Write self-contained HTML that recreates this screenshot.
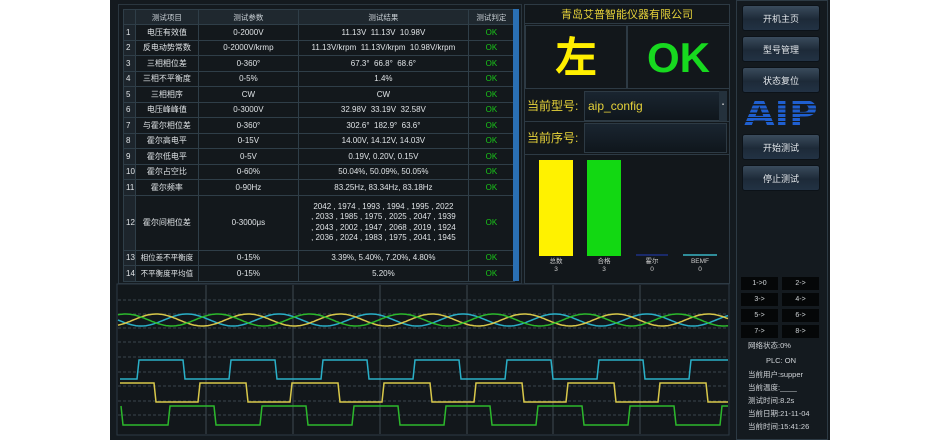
<!DOCTYPE html>
<html><head><meta charset="utf-8"><style>
*{margin:0;padding:0;box-sizing:border-box}
body{width:940px;height:440px;background:#fff;position:relative;overflow:hidden;font-family:"Liberation Sans","Noto Sans CJK SC",sans-serif}
.a{position:absolute}
#main{left:110px;top:0;width:720px;height:440px;background:#141a1f}
table{position:absolute;left:123px;top:9px;border-collapse:collapse;table-layout:fixed;font-size:8px;color:#dfe3e6}
td{border:1px solid #2f3e48;text-align:center;background:#13181c;height:15.5px;padding:0;line-height:9px;white-space:nowrap;overflow:hidden}
tr.h td{background:#1f282f;color:#c8cfd4;height:15px;font-size:7.5px}
td.n{background:#1d252c;text-align:left;padding-left:2px}
td.ok{color:#19c719}
.btn{left:742px;width:78px;height:26px;border-radius:3px;background:linear-gradient(#3a4b5c,#1d2a38 55%,#223244);color:#e4e8ec;font-size:9px;text-align:center;line-height:26px;border:1px solid #0c1218}
.box{border:1px solid #2d3a44;background:#12171b}
.nb{width:37px;height:13px;background:#050708;color:#cfd3d6;font-size:7px;text-align:center;line-height:13px}
.st{color:#d0d4d8;font-size:7.5px;left:748px}
</style></head><body>
<div id="main" class="a"></div>
<div class="a" style="left:118px;top:4px;width:404px;height:280px;border:1px solid #2a363f"></div>
<table>
<colgroup><col style="width:11px"><col style="width:63px"><col style="width:100px"><col style="width:170px"><col style="width:46px"></colgroup>
<tr class="h"><td class="n"></td><td>测试项目</td><td>测试参数</td><td>测试结果</td><td>测试判定</td></tr>
<tr><td class="n">1</td><td>电压有效值</td><td>0-2000V</td><td>11.13V&nbsp; 11.13V&nbsp; 10.98V</td><td class="ok">OK</td></tr>
<tr><td class="n">2</td><td>反电动势常数</td><td>0-2000V/krmp</td><td>11.13V/krpm&nbsp; 11.13V/krpm&nbsp; 10.98V/krpm</td><td class="ok">OK</td></tr>
<tr><td class="n">3</td><td>三相相位差</td><td>0-360°</td><td>67.3°&nbsp; 66.8°&nbsp; 68.6°</td><td class="ok">OK</td></tr>
<tr><td class="n">4</td><td>三相不平衡度</td><td>0-5%</td><td>1.4%</td><td class="ok">OK</td></tr>
<tr><td class="n">5</td><td>三相相序</td><td>CW</td><td>CW</td><td class="ok">OK</td></tr>
<tr><td class="n">6</td><td>电压峰峰值</td><td>0-3000V</td><td>32.98V&nbsp; 33.19V&nbsp; 32.58V</td><td class="ok">OK</td></tr>
<tr><td class="n">7</td><td>与霍尔相位差</td><td>0-360°</td><td>302.6°&nbsp; 182.9°&nbsp; 63.6°</td><td class="ok">OK</td></tr>
<tr><td class="n">8</td><td>霍尔高电平</td><td>0-15V</td><td>14.00V, 14.12V, 14.03V</td><td class="ok">OK</td></tr>
<tr><td class="n">9</td><td>霍尔低电平</td><td>0-5V</td><td>0.19V, 0.20V, 0.15V</td><td class="ok">OK</td></tr>
<tr><td class="n">10</td><td>霍尔占空比</td><td>0-60%</td><td>50.04%, 50.09%, 50.05%</td><td class="ok">OK</td></tr>
<tr><td class="n">11</td><td>霍尔频率</td><td>0-90Hz</td><td>83.25Hz, 83.34Hz, 83.18Hz</td><td class="ok">OK</td></tr>
<tr><td class="n" style="height:55px">12</td><td>霍尔间相位差</td><td>0-3000μs</td><td style="line-height:10.5px">2042 , 1974 , 1993 , 1994 , 1995 , 2022<br>, 2033 , 1985 , 1975 , 2025 , 2047 , 1939<br>, 2043 , 2002 , 1947 , 2068 , 2019 , 1924<br>, 2036 , 2024 , 1983 , 1975 , 2041 , 1945</td><td class="ok">OK</td></tr>
<tr><td class="n">13</td><td style="font-size:7.5px">相位差不平衡度</td><td>0-15%</td><td>3.39%, 5.40%, 7.20%, 4.80%</td><td class="ok">OK</td></tr>
<tr><td class="n">14</td><td style="font-size:7.5px">不平衡度平均值</td><td>0-15%</td><td>5.20%</td><td class="ok">OK</td></tr>
</table>
<div class="a" style="left:513px;top:9px;width:6px;height:272px;background:#2a6fb3"></div>

<div class="a box" style="left:524px;top:4px;width:206px;height:280px"></div>
<div class="a" style="left:525px;top:6px;width:204px;height:18px;color:#e6d23a;font-size:11px;text-align:center;line-height:18px;border-bottom:1px solid #2d3a44">青岛艾普智能仪器有限公司</div>
<div class="a box" style="left:525px;top:25px;width:102px;height:64px;color:#ffef00;font-size:42px;font-weight:bold;text-align:center;line-height:64px">左</div>
<div class="a box" style="left:627px;top:25px;width:103px;height:64px;color:#17d91f;font-size:42px;font-weight:bold;text-align:center;line-height:64px">OK</div>
<div class="a" style="left:527px;top:91px;width:58px;height:30px;color:#e6d23a;font-size:12px;line-height:30px">当前型号:</div>
<div class="a" style="left:584px;top:91px;width:136px;height:30px;background:linear-gradient(#1a2530,#0f161c);border:1px solid #2d3a44;color:#e6d23a;font-size:12px;line-height:28px;padding-left:3px">aip_config</div>
<div class="a" style="left:719px;top:91px;width:8px;height:30px;background:#24313c;color:#ccc;font-size:6px;text-align:center;line-height:28px">▪</div>
<div class="a" style="left:524px;top:121px;width:206px;height:1px;background:#2d3a44"></div>
<div class="a" style="left:527px;top:123px;width:58px;height:30px;color:#e6d23a;font-size:12px;line-height:30px">当前序号:</div>
<div class="a" style="left:584px;top:123px;width:143px;height:30px;background:linear-gradient(#1a2530,#0f161c);border:1px solid #2d3a44"></div>
<div class="a" style="left:524px;top:154px;width:206px;height:1px;background:#2d3a44"></div>
<div class="a" style="left:539px;top:160px;width:34px;height:96px;background:#fff200"></div>
<div class="a" style="left:587px;top:160px;width:34px;height:96px;background:#12d812"></div>
<div class="a" style="left:636px;top:254px;width:32px;height:2px;background:#1a2a6a"></div>
<div class="a" style="left:683px;top:254px;width:34px;height:2px;background:#2f8d9a"></div>
<div class="a" style="left:539px;top:258px;width:34px;color:#ccc;font-size:6.5px;text-align:center;line-height:8px">总数<br>3</div>
<div class="a" style="left:587px;top:258px;width:34px;color:#ccc;font-size:6.5px;text-align:center;line-height:8px">合格<br>3</div>
<div class="a" style="left:636px;top:258px;width:32px;color:#ccc;font-size:6.5px;text-align:center;line-height:8px">霍尔<br>0</div>
<div class="a" style="left:683px;top:258px;width:34px;color:#ccc;font-size:6.5px;text-align:center;line-height:8px">BEMF<br>0</div>

<div class="a" style="left:736px;top:0;width:92px;height:440px;border:1px solid #2d3a44;background:#141a1f"></div>
<div class="a btn" style="top:5px">开机主页</div>
<div class="a btn" style="top:36px">型号管理</div>
<div class="a btn" style="top:67px">状态复位</div>
<div class="a" style="left:742px;top:97px;width:78px;height:34px;text-align:center;font-family:'DejaVu Sans',sans-serif;font-size:34px;font-weight:900;line-height:34px;color:transparent;background:repeating-linear-gradient(#1f5fd0 0 3px,#141a1f 3px 4.2px);-webkit-background-clip:text;background-clip:text;transform:scaleX(1.15)">AIP</div>
<div class="a btn" style="top:134px">开始测试</div>
<div class="a btn" style="top:165px">停止测试</div>
<div class="a nb" style="left:741px;top:277px">1->0</div><div class="a nb" style="left:782px;top:277px">2-></div>
<div class="a nb" style="left:741px;top:293px">3-></div><div class="a nb" style="left:782px;top:293px">4-></div>
<div class="a nb" style="left:741px;top:309px">5-></div><div class="a nb" style="left:782px;top:309px">6-></div>
<div class="a nb" style="left:741px;top:325px">7-></div><div class="a nb" style="left:782px;top:325px">8-></div>
<div class="a st" style="top:340px">网络状态:0%</div>
<div class="a st" style="top:356px;left:766px">PLC: ON</div>
<div class="a st" style="top:369px">当前用户:supper</div>
<div class="a st" style="top:382px">当前温度:____</div>
<div class="a st" style="top:395px">测试时间:8.2s</div>
<div class="a st" style="top:408px">当前日期:21-11-04</div>
<div class="a st" style="top:421px">当前时间:15:41:26</div>

<svg class="a" style="left:110px;top:280px" width="626" height="160" viewBox="110 280 626 160">
<rect x="117" y="284" width="612" height="151" fill="#12171b" stroke="#2d3a44"/>
<g stroke="#3a444c" stroke-width="1" stroke-dasharray="3 2">
<line x1="118" x2="728" y1="300" y2="300"/><line x1="118" x2="728" y1="314" y2="314"/><line x1="118" x2="728" y1="328" y2="328"/><line x1="118" x2="728" y1="342" y2="342"/><line x1="118" x2="728" y1="357" y2="357"/><line x1="118" x2="728" y1="372" y2="372"/><line x1="118" x2="728" y1="386" y2="386"/><line x1="118" x2="728" y1="401" y2="401"/><line x1="118" x2="728" y1="415" y2="415"/>
</g>
<g stroke="#3f4a52" stroke-width="1">
<line x1="206" x2="206" y1="285" y2="434"/><line x1="293" x2="293" y1="285" y2="434"/><line x1="380" x2="380" y1="285" y2="434"/><line x1="467" x2="467" y1="285" y2="434"/><line x1="553" x2="553" y1="285" y2="434"/><line x1="640" x2="640" y1="285" y2="434"/>
</g>
<g fill="none" stroke-width="1.5">
<path id="s1" stroke="#2ab0c8" d=""/>
<path id="s2" stroke="#d8c84a" d=""/>
<path id="s3" stroke="#2cb82c" d=""/>
<path stroke="#2ab0c8" d="M120 379H137L139 360H183L185 379H229L231 360H275L277 379H321L323 360H367L369 379H413L415 360H459L461 379H505L507 360H551L553 379H597L599 360H643L645 379H689L691 360H728"/>
<path stroke="#d8c84a" d="M120 383H154L156 402H198L200 383H246L248 402H290L292 383H338L340 402H382L384 383H430L432 402H474L476 383H522L524 402H566L568 383H614L616 402H658L660 383H706L708 402H728"/>
<path stroke="#2cb82c" d="M121 406L123 425H168L170 406H214L216 425H260L262 406H306L308 425H352L354 406H398L400 425H444L446 406H490L492 425H536L538 406H582L584 425H628L630 406H674L676 425H720L722 406H728"/>
</g>
</svg>
<script>
function sine(ph){var d="";for(var x=118;x<=728;x+=2){var y=320+6*Math.sin((x-118)/92*2*Math.PI+ph);d+=(x==118?"M":"L")+x+" "+y.toFixed(1);}return d;}
document.getElementById("s1").setAttribute("d",sine(0));
document.getElementById("s2").setAttribute("d",sine(2.094));
document.getElementById("s3").setAttribute("d",sine(4.189));
</script>
</body></html>
